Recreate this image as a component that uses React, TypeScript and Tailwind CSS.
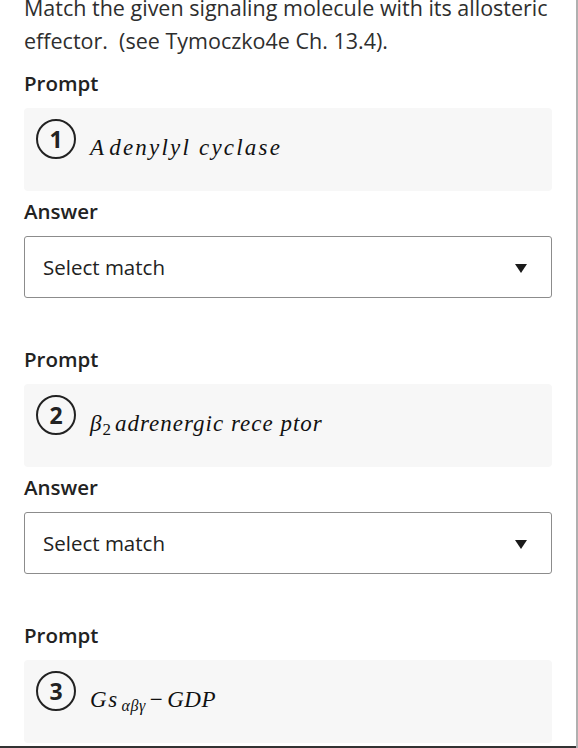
import React from 'react';

const sans = "font-['Open_Sans','Noto_Sans',sans-serif]";
const serif = "font-['Liberation_Serif','Times_New_Roman',serif]";

function NumberBadge({ n }: { n: number }) {
  return (
    <div className="flex h-10 w-10 shrink-0 items-center justify-center rounded-full border-[2.5px] border-[#222]">
      <span className="text-[23px] font-bold leading-none text-[#222]">{n}</span>
    </div>
  );
}

function PromptCard({ n, children }: { n: number; children: React.ReactNode }) {
  return (
    <div className="mt-[11px] flex h-[83px] items-start gap-[14px] rounded-[4px] bg-[#f7f7f7] pl-3 pt-[11px]">
      <NumberBadge n={n} />
      <div className={`${serif} mt-[9px] text-[23px] italic leading-[40px] text-[#111]`}>{children}</div>
    </div>
  );
}

function SelectMatch() {
  return (
    <button className="mt-[11px] flex h-[62px] w-full items-center justify-between rounded-[3px] border border-[#8c8c8c] bg-white pl-[18px] pr-6 text-left">
      <span className="text-[20.5px] text-[#222]">Select match</span>
      <svg width="12" height="9" viewBox="0 0 12 9" className="mt-[2px]">
        <path d="M0 0 H12 L6 9 Z" fill="#1a1a1a" />
      </svg>
    </button>
  );
}

function Section({
  n,
  children,
  first,
  withAnswer = true,
}: {
  n: number;
  children: React.ReactNode;
  first?: boolean;
  withAnswer?: boolean;
}) {
  return (
    <div className={first ? 'mt-[12px]' : 'mt-[47px]'}>
      <h3 className="text-[20.5px] font-semibold leading-[28px] text-[#222]">Prompt</h3>
      <PromptCard n={n}>{children}</PromptCard>
      {withAnswer && (
        <>
          <h3 className="mt-[6px] text-[20.5px] font-semibold leading-[28px] text-[#222]">Answer</h3>
          <SelectMatch />
        </>
      )}
    </div>
  );
}

export default function App() {
  return (
    <div className={`${sans} relative h-screen overflow-hidden border-r-2 border-[#b0b0b0] bg-white`}>
      <div className="px-6">
        <p className="mt-[-9px] text-[21.5px] leading-[33px] text-[#2e2e2e]">
          Match the given signaling molecule with its allosteric effector.&nbsp; (see Tymoczko4e Ch. 13.4).
        </p>

        <Section n={1} first>
          <span className="tracking-[2.2px]">
            A<span className="ml-[3px]">denylyl</span> cyclase
          </span>
        </Section>

        <Section n={2}>
          <span className="tracking-[1px]">
            β<sub className="text-[17px] not-italic">2</sub>
            <span className="ml-[3px]">adrenergic rece ptor</span>
          </span>
        </Section>

        <Section n={3} withAnswer={false}>
          <span className="tracking-[0.5px]">
            G<span className="ml-[1px]">s</span>
            <sub className="ml-[4px] text-[16px]">αβγ</sub>
            <span className="mx-[4px] not-italic">−</span>GDP
          </span>
        </Section>
      </div>
      <div className="absolute bottom-0 left-0 right-0 h-[2px] bg-[#333]" />
    </div>
  );
}
